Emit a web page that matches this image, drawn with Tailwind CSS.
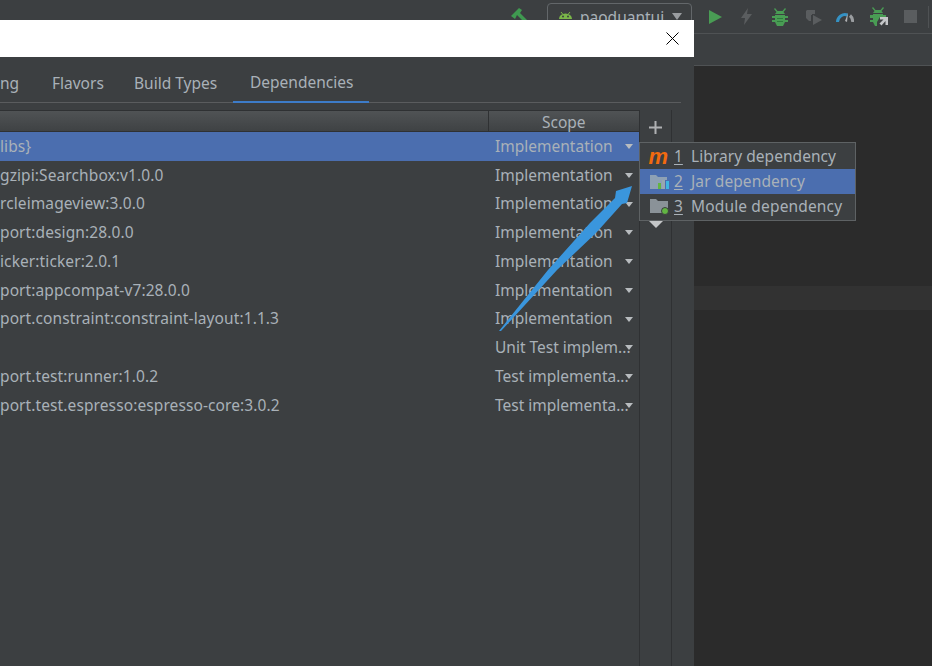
<!DOCTYPE html>
<html>
  <head>
    <title>Project Structure</title>
    <meta charset="UTF-8" />
    <script src="https://cdn.jsdelivr.net/npm/@tailwindcss/browser@4"></script>
  </head>
  <body class="relative h-[666px] w-[932px] overflow-hidden bg-[#2b2b2b] font-['Noto_Sans','Open_Sans',sans-serif] text-[15.5px] text-[#a9b1b8]">
    <!-- IDE toolbar behind the dialog -->
    <div class="flex h-[34px] items-center justify-end border-b border-[#4f5254] bg-[#3c3f41] pr-[3px]">
      <svg class="mr-[19px] h-[18px] w-[17px]" viewBox="0 0 17 18"><path d="M0 8 8 0l3 2-2 3 8 8-3 2-8-8-2 4z" fill="#3f9a50"/></svg>
      <div class="relative mt-[3px] mr-[17px] flex h-[40px] w-[145px] items-start self-start rounded-[4px] border border-[#63676a] pt-[2px] pl-[10px]">
        <svg class="mt-[6px] mr-[7px] h-[14px] w-[15px]" viewBox="0 0 15 14"><path d="M3 0l2 2.500M12 0l-2 2.500" stroke="#7ab648" stroke-width="1"/><path d="M1 7a6.500 5.500 0 0 1 13 0zM1 8h13v6H1z" fill="#7ab648"/><circle cx="5" cy="4.500" r="1" fill="#3c3f41"/><circle cx="10" cy="4.500" r="1" fill="#3c3f41"/></svg>
        <span>paoduantui</span>
        <i class="absolute top-[9px] right-[9px] h-0 w-0 border-x-[5px] border-t-[7px] border-x-transparent border-t-[#9a9da0]"></i>
      </div>
      <svg class="mr-[19px] h-[14px] w-[13px]" viewBox="0 0 13 14"><path d="M0 0 13 7 0 14z" fill="#499c54"/></svg>
      <svg class="mr-[20px] h-[17px] w-[11px]" viewBox="0 0 11 17"><path d="M7 0 0 10h4l-1 7 8-11H6z" fill="#5a5d5f"/></svg>
      <svg class="mr-[17px] h-[18px] w-[16px]" viewBox="0 0 16 18"><path d="M3 0l2.500 3h5L13 0l1 1-2.500 3 1.500 2H3l1.500-2L2 1z" fill="#499c54"/><path d="M3 7h10v1h3v2h-3v2h3v2h-3l-1 2-1 2H5l-1-2-1-2H0v-2h3v-2H0V8h3z" fill="#499c54"/><path d="M5 10h6v1H5zM5 13h6v1H5z" fill="#2f7a3c"/></svg>
      <svg class="mr-[14px] h-[16px] w-[17px]" viewBox="0 0 17 16"><path d="M2 1h8v4H7v1H6v6H4L1 9V2z" fill="#5a5d5f"/><path d="M8 6 17 11 8 16z" fill="#5a5d5f"/></svg>
      <svg class="mr-[16px] h-[11px] w-[18px]" viewBox="0 0 18 11"><path d="M1.500 11a7.500 7.500 0 0 1 10-7" fill="none" stroke="#3592c4" stroke-width="3"/><path d="M14 4.500a7.500 7.500 0 0 1 2.500 6.500" fill="none" stroke="#9a9da0" stroke-width="3"/><path d="M12 2l-3 8 2 1z" fill="#afb1b3"/></svg>
      <svg class="mr-[16px] h-[19px] w-[18px]" viewBox="0 0 18 19"><path d="M3 0l2.500 3h5L13 0l1 1-2.500 3 1.500 2H3l1.500-2L2 1z" fill="#499c54"/><path d="M3 7h10v1h3v2h-6l-3 5v4H5l-1-2-1-2H0v-2h3v-2H0V8h3z" fill="#499c54"/><path d="M10 10h8v8h-2.500v-4l-4 4.500-2-2 4-4H10z" fill="#c4c6c8"/></svg>
      <div class="mr-[11px] h-[13px] w-[13px] bg-[#5a5d5f]"></div>
      <div class="h-[22px] w-px bg-[#4f5254]"></div>
    </div>
    <div class="h-[32px] border-b border-[#4f5254] bg-[#3c3f41]"></div>
    <div class="mt-[220px] ml-[694px] h-[24px] bg-[#323232]"></div>

    <!-- Dialog -->
    <div class="absolute top-[20px] left-0 flex h-[646px] w-[694px] flex-col bg-[#3c3f41]">
      <div class="flex h-[37px] items-center justify-end bg-white pr-[15px]">
        <svg class="h-[13px] w-[13px]" viewBox="0 0 13 13"><path d="M.5.5l12 12M12.500.5l-12 12" stroke="#000" stroke-width="1"/></svg>
      </div>
      <div class="mr-[13px] flex h-[46px] items-stretch border-b border-[#5a5c5e]">
        <div class="flex w-[52px] items-center pt-[8px]">ng</div>
        <div class="flex w-[82px] items-center pt-[8px]">Flavors</div>
        <div class="flex w-[99px] items-center pt-[8px]">Build Types</div>
        <div class="-mb-px flex w-[136px] items-center border-b-2 border-[#3d7cc9] pt-[8px] pl-[17px]">Dependencies</div>
      </div>
      <div class="mt-[7px] flex min-h-0 flex-1">
        <div class="w-[639px]">
          <div class="flex h-[22.15px] border-t border-b border-[#2f3133] bg-gradient-to-b from-[#505355] to-[#3f4244]">
            <div class="flex-1"></div>
            <div class="w-[151px] border-l border-[#2f3133] pl-[53px] leading-[22px]">Scope</div>
          </div>
          <div class="flex h-[28.75px] items-center justify-between bg-[#4b6eaf] pr-[6px]"><span class="tracking-[0.1px]">libs}</span><div class="flex w-[138px] items-center justify-between"><span class="w-[128px] shrink-0 whitespace-nowrap">Implementation</span><i class="h-0 w-0 border-x-[4px] border-t-[5px] border-x-transparent border-t-[#b8bcbf]"></i></div></div>
          <div class="flex h-[28.75px] items-center justify-between pr-[6px]"><span class="tracking-[0.1px]">gzipi:Searchbox:v1.0.0</span><div class="flex w-[138px] items-center justify-between"><span class="w-[128px] shrink-0 whitespace-nowrap">Implementation</span><i class="h-0 w-0 border-x-[4px] border-t-[5px] border-x-transparent border-t-[#b8bcbf]"></i></div></div>
          <div class="flex h-[28.75px] items-center justify-between pr-[6px]"><span class="tracking-[0.1px]">rcleimageview:3.0.0</span><div class="flex w-[138px] items-center justify-between"><span class="w-[128px] shrink-0 whitespace-nowrap">Implementation</span><i class="h-0 w-0 border-x-[4px] border-t-[5px] border-x-transparent border-t-[#b8bcbf]"></i></div></div>
          <div class="flex h-[28.75px] items-center justify-between pr-[6px]"><span class="tracking-[0.1px]">port:design:28.0.0</span><div class="flex w-[138px] items-center justify-between"><span class="w-[128px] shrink-0 whitespace-nowrap">Implementation</span><i class="h-0 w-0 border-x-[4px] border-t-[5px] border-x-transparent border-t-[#b8bcbf]"></i></div></div>
          <div class="flex h-[28.75px] items-center justify-between pr-[6px]"><span class="tracking-[0.1px]">icker:ticker:2.0.1</span><div class="flex w-[138px] items-center justify-between"><span class="w-[128px] shrink-0 whitespace-nowrap">Implementation</span><i class="h-0 w-0 border-x-[4px] border-t-[5px] border-x-transparent border-t-[#b8bcbf]"></i></div></div>
          <div class="flex h-[28.75px] items-center justify-between pr-[6px]"><span class="tracking-[0.1px]">port:appcompat-v7:28.0.0</span><div class="flex w-[138px] items-center justify-between"><span class="w-[128px] shrink-0 whitespace-nowrap">Implementation</span><i class="h-0 w-0 border-x-[4px] border-t-[5px] border-x-transparent border-t-[#b8bcbf]"></i></div></div>
          <div class="flex h-[28.75px] items-center justify-between pr-[6px]"><span class="tracking-[0.1px]">port.constraint:constraint-layout:1.1.3</span><div class="flex w-[138px] items-center justify-between"><span class="w-[128px] shrink-0 whitespace-nowrap">Implementation</span><i class="h-0 w-0 border-x-[4px] border-t-[5px] border-x-transparent border-t-[#b8bcbf]"></i></div></div>
          <div class="flex h-[28.75px] items-center justify-between pr-[6px]"><span></span><div class="flex w-[138px] items-center justify-between"><span class="w-[128px] shrink-0 whitespace-nowrap">Unit Test implem...</span><i class="h-0 w-0 border-x-[4px] border-t-[5px] border-x-transparent border-t-[#b8bcbf]"></i></div></div>
          <div class="flex h-[28.75px] items-center justify-between pr-[6px]"><span class="tracking-[0.1px]">port.test:runner:1.0.2</span><div class="flex w-[138px] items-center justify-between"><span class="w-[128px] shrink-0 whitespace-nowrap">Test implementa...</span><i class="h-0 w-0 border-x-[4px] border-t-[5px] border-x-transparent border-t-[#b8bcbf]"></i></div></div>
          <div class="flex h-[28.75px] items-center justify-between pr-[6px]"><span class="tracking-[0.1px]">port.test.espresso:espresso-core:3.0.2</span><div class="flex w-[138px] items-center justify-between"><span class="w-[128px] shrink-0 whitespace-nowrap">Test implementa...</span><i class="h-0 w-0 border-x-[4px] border-t-[5px] border-x-transparent border-t-[#b8bcbf]"></i></div></div>
        </div>
        <div class="flex w-[33px] flex-col items-center border-x border-[#2f3133] pt-[11px]">
          <svg class="h-[13px] w-[13px]" viewBox="0 0 13 13"><path d="M5.500 0h2v5.500H13v2H7.500V13h-2V7.500H0v-2h5.500z" fill="#afb1b3"/></svg>
          <i class="mt-[87px] h-0 w-0 border-x-[7px] border-t-[7px] border-x-transparent border-t-[#c4c6c8]"></i>
        </div>
      </div>
    </div>

    <!-- Add dependency popup -->
    <div class="absolute top-[142px] left-[639px] w-[217px] border border-[#5e6264] bg-[#3c3f41] py-px">
      <div class="flex h-[25px] items-center">
        <span class="w-[34px] pr-[6px] text-right font-['Liberation_Sans',sans-serif] text-[22px] leading-none font-bold text-[#f26a0f] italic">m</span>
        <span class="w-[17px] underline underline-offset-2">1</span><span class="tracking-[0.05px]">Library dependency</span>
      </div>
      <div class="flex h-[25px] items-center bg-[#4b6eaf]">
        <svg class="mr-[5px] ml-[10px] h-[16px] w-[19px]" viewBox="0 0 19 16"><path d="M0 1h6l2 2h9v3h-5v9H0z" fill="#8ea1b5"/><path d="M8 9h3v6H8z" fill="#62b543"/><path d="M12 6h3v9h-3z" fill="#9aa7b0"/><path d="M16 7h3v8h-3z" fill="#40b6e0"/></svg>
        <span class="w-[17px] underline underline-offset-2">2</span><span class="tracking-[0.1px]">Jar dependency</span>
      </div>
      <div class="flex h-[25px] items-center">
        <svg class="mr-[5px] ml-[10px] h-[17px] w-[19px]" viewBox="0 0 19 17"><path d="M0 1h6l2 2h10v7h-6v5H0z" fill="#8a9298"/><circle cx="15" cy="13" r="3.500" fill="#62b543" stroke="#3c3f41"/></svg>
        <span class="w-[17px] underline underline-offset-2">3</span><span class="tracking-[0.15px]">Module dependency</span>
      </div>
    </div>

    <!-- Annotation arrow drawn over the screenshot -->
    <svg class="absolute top-0 left-0" width="932" height="666" viewBox="0 0 932 666"><path d="M499 331 548 270 590 223 615 198 616 191 632 186 627 203 622 204 596 233 557 270 501 331z" fill="#3a96dd"/></svg>
  </body>
</html>
